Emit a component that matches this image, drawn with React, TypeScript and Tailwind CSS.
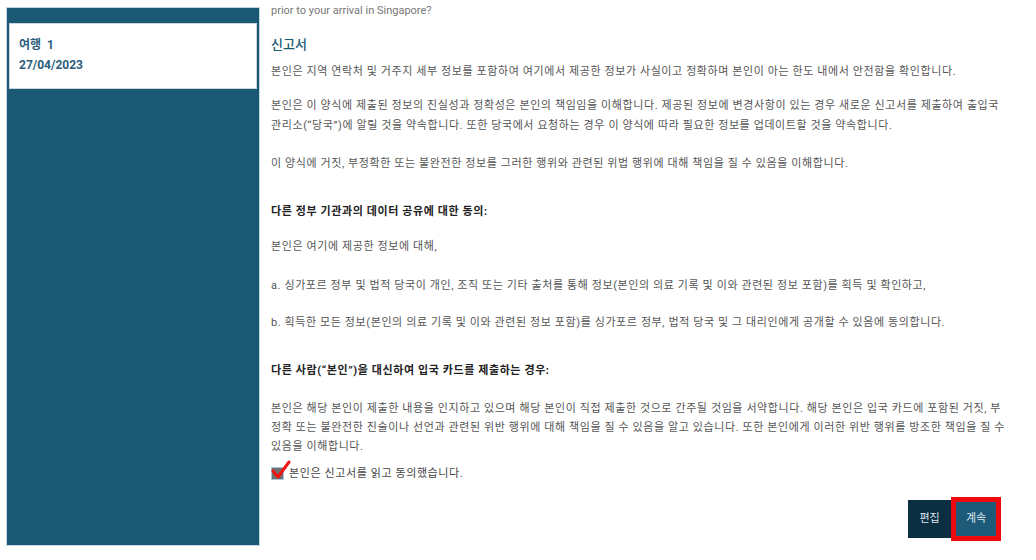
const body = "text-[11px] leading-[19px] tracking-[0.6px] text-[#555555]";
const bold = "text-[11px] leading-[19px] tracking-[0.6px] font-bold text-[#222222]";

function CheckMark() {
  return (
    <span className="relative inline-block w-[13px] h-[13px] bg-[#707070] border border-[#a8c6de] shrink-0">
      <svg
        viewBox="0 0 20 20"
        className="absolute -left-[1px] -top-[8px] w-[20px] h-[20px]"
      >
        <path
          d="M2 11 L7 17 L18 2"
          fill="none"
          stroke="#f01414"
          strokeWidth="3"
          strokeLinecap="round"
          strokeLinejoin="round"
        />
      </svg>
    </span>
  );
}

export default function App() {
  return (
    <div
      className="w-[1036px] h-[560px] overflow-hidden bg-white flex items-start pl-[6px]"
      style={{ fontFamily: 'Roboto, "Noto Sans CJK KR", sans-serif' }}
    >
      {/* Sidebar */}
      <aside className="mt-[7px] w-[254px] h-[539px] shrink-0 bg-[#1b5874] border border-[#c3d7e3] px-[2px] pt-[15px]">
        <div className="bg-white border border-[#c9d3da] h-[66px] pl-[9px] pt-[11px]">
          <div className="text-[12px] leading-[20px] font-bold text-[#2b5d7b]">
            여행&nbsp;&nbsp;1
          </div>
          <div className="text-[12px] leading-[20px] font-bold text-[#2b5d7b]">27/04/2023</div>
        </div>
      </aside>

      {/* Main */}
      <main className="ml-[11px] flex-1 pr-[20px]">
        <p className={`${body} text-[#777777] tracking-normal mt-[1px]`}>prior to your arrival in Singapore?</p>

        <h2 className="mt-[15px] text-[13px] leading-[20px] font-medium text-[#1b5874]">신고서</h2>

        <p className={`${body} mt-[7px] whitespace-nowrap`}>
          본인은 지역 연락처 및 거주지 세부 정보를 포함하여 여기에서 제공한 정보가 사실이고 정확하며 본인이 아는 한도 내에서 안전함을 확인합니다.
        </p>

        <p className={`${body} mt-[15px] leading-[20px] whitespace-nowrap`}>
          본인은 이 양식에 제출된 정보의 진실성과 정확성은 본인의 책임임을 이해합니다. 제공된 정보에 변경사항이 있는 경우 새로운 신고서를 제출하여 출입국
          <br />
          관리소(“당국”)에 알릴 것을 약속합니다. 또한 당국에서 요청하는 경우 이 양식에 따라 필요한 정보를 업데이트할 것을 약속합니다.
        </p>

        <p className={`${body} mt-[18px] whitespace-nowrap`}>
          이 양식에 거짓, 부정확한 또는 불완전한 정보를 그러한 행위와 관련된 위법 행위에 대해 책임을 질 수 있음을 이해합니다.
        </p>

        <h3 className={`${bold} mt-[29px]`}>다른 정부 기관과의 데이터 공유에 대한 동의:</h3>

        <p className={`${body} mt-[16px]`}>본인은 여기에 제공한 정보에 대해,</p>

        <p className={`${body} mt-[20px] whitespace-nowrap`}>
          a. 싱가포르 정부 및 법적 당국이 개인, 조직 또는 기타 출처를 통해 정보(본인의 의료 기록 및 이와 관련된 정보 포함)를 획득 및 확인하고,
        </p>

        <p className={`${body} mt-[18px] whitespace-nowrap`}>
          b. 획득한 모든 정보(본인의 의료 기록 및 이와 관련된 정보 포함)를 싱가포르 정부, 법적 당국 및 그 대리인에게 공개할 수 있음에 동의합니다.
        </p>

        <h3 className={`${bold} mt-[29px]`}>다른 사람(“본인”)을 대신하여 입국 카드를 제출하는 경우:</h3>

        <p className={`${body} mt-[19px] whitespace-nowrap`}>
          본인은 해당 본인이 제출한 내용을 인지하고 있으며 해당 본인이 직접 제출한 것으로 간주될 것임을 서약합니다. 해당 본인은 입국 카드에 포함된 거짓, 부
          <br />
          정확 또는 불완전한 진술이나 선언과 관련된 위반 행위에 대해 책임을 질 수 있음을 알고 있습니다. 또한 본인에게 이러한 위반 행위를 방조한 책임을 질 수
          <br />
          있음을 이해합니다.
        </p>

        <label className="mt-[8px] flex items-center gap-[5px] h-[19px]">
          <CheckMark />
          <span className="text-[11px] leading-[19px] tracking-[0.6px] text-[#444444]">본인은 신고서를 읽고 동의했습니다.</span>
        </label>

        <div className="mt-[14px] flex items-center justify-end pr-[15px]">
          <button className="w-[43px] h-[38px] bg-[#0b2e43] text-[11px] text-[#dfe8ee]">편집</button>
          <button className="w-[50px] h-[44px] bg-[#1d5a78] border-[5px] border-[#ee0a0a] text-[11px] text-[#dfe8ee]">
            계속
          </button>
        </div>
      </main>
    </div>
  );
}
